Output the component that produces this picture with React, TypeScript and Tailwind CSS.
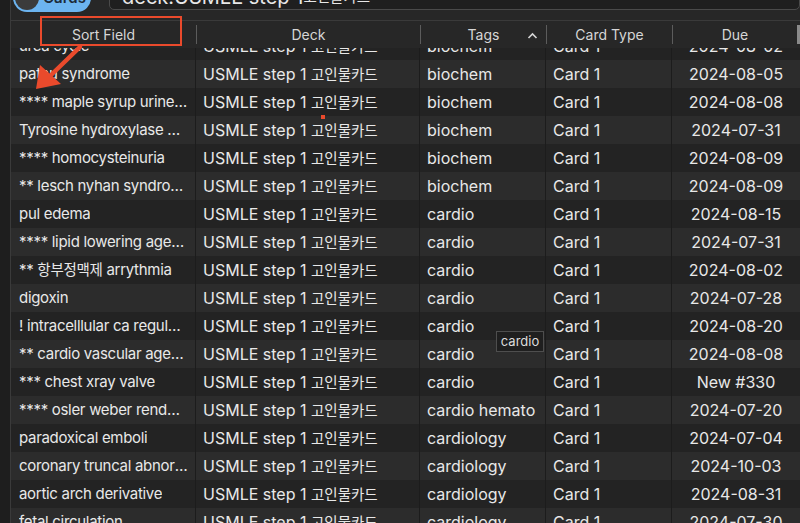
import React from "react";

const rows = [
  { sort: "urea cycle", tags: "biochem", due: "2024-08-02" },
  { sort: "patau syndrome", tags: "biochem", due: "2024-08-05" },
  { sort: "**** maple syrup urine disease", tags: "biochem", due: "2024-08-08" },
  { sort: "Tyrosine hydroxylase deficiency", tags: "biochem", due: "2024-07-31" },
  { sort: "**** homocysteinuria", tags: "biochem", due: "2024-08-09" },
  { sort: "** lesch nyhan syndrome", tags: "biochem", due: "2024-08-09" },
  { sort: "pul edema", tags: "cardio", due: "2024-08-15" },
  { sort: "**** lipid lowering agents", tags: "cardio", due: "2024-07-31" },
  { sort: "** 항부정맥제 arrythmia", tags: "cardio", due: "2024-08-02" },
  { sort: "digoxin", tags: "cardio", due: "2024-07-28" },
  { sort: "! intracelllular ca regulation", tags: "cardio", due: "2024-08-20" },
  { sort: "** cardio vascular agents", tags: "cardio", due: "2024-08-08" },
  { sort: "*** chest xray valve", tags: "cardio", due: "New #330" },
  { sort: "**** osler weber rendu syndrome", tags: "cardio hemato", due: "2024-07-20" },
  { sort: "paradoxical emboli", tags: "cardiology", due: "2024-07-04" },
  { sort: "coronary truncal abnormalities", tags: "cardiology", due: "2024-10-03" },
  { sort: "aortic arch derivative", tags: "cardiology", due: "2024-08-31" },
  { sort: "fetal circulation", tags: "cardiology", due: "2024-07-30" },
];

const font = { fontFamily: "Inter, 'Noto Sans CJK KR', sans-serif" };

// hangul runs render a bit smaller so they sit like the mac font
function Mixed({ text }: { text: string }) {
  return (
    <>
      {text.split(/([\uAC00-\uD7A3]+)/).map((part, i) =>
        /[\uAC00-\uD7A3]/.test(part) ? (
          <span key={i} className="text-[14.5px]">{part}</span>
        ) : (
          <React.Fragment key={i}>{part}</React.Fragment>
        )
      )}
    </>
  );
}

export default function App() {
  return (
    <div
      className="relative flex h-[523px] w-[800px] overflow-hidden bg-[#262626] text-[#e8e8e8]"
      style={font}
    >
      {/* left sidebar edge */}
      <div className="w-[11px] shrink-0 border-r border-[#3a3a3a] bg-[#1e1e1e]" />

      <div className="flex min-w-0 flex-1 flex-col">
        {/* toolbar, scrolled mostly out of view */}
        <div className="h-[20px] shrink-0 bg-[#272727]">
          <div className="flex h-[12px] items-end gap-[18px] overflow-hidden pl-[2px]">
            <div className="flex h-[28px] w-[78px] shrink-0 items-center gap-[4px] rounded-full bg-[#6cb4f0] pl-[2px]">
              <div className="h-[24px] w-[24px] rounded-full bg-[#3b3b3b]" />
              <span className="text-[15px] font-semibold text-[#1c2a38]">Cards</span>
            </div>
            <div className="mb-[2px] flex h-[28px] flex-1 items-center rounded-[5px] border border-[#4a4a4a] bg-[#1f1f1f] pl-[12px] pt-[2px] text-[20px] text-[#e8e8e8]">
              <Mixed text="deck:USMLE step 1 고인물카드" />
            </div>
          </div>
        </div>

        {/* header */}
        <div className="flex h-[28px] shrink-0 border-t border-[#3a3a3a] bg-[#272727] text-[14px] text-[#d6d6d6]">
          <div className="flex w-[185px] items-center justify-center">Sort Field</div>
          <div className="my-[4px] flex w-[224px] items-center justify-center border-l border-[#5c5c5c]">Deck</div>
          <div className="relative my-[4px] flex w-[126px] items-center justify-center border-l border-[#5c5c5c]">
            Tags
            <svg className="absolute right-[8px] top-[7px]" width="11" height="8" viewBox="0 0 11 8">
              <path d="M1.5 6 L5.5 2 L9.5 6" fill="none" stroke="#d6d6d6" strokeWidth="1.6" />
            </svg>
          </div>
          <div className="my-[4px] flex w-[126px] items-center justify-center border-l border-[#5c5c5c]">Card Type</div>
          <div className="my-[4px] flex flex-1 items-center justify-center border-l border-r-[3px] border-[#5c5c5c] border-r-[#8a8a8a]">Due</div>
        </div>

        {/* rows, scrolled a little */}
        <div className="min-h-0 flex-1 overflow-hidden">
          <div className="-mt-[16px]">
            {rows.map((r, i) => (
              <div
                key={i}
                className={`flex h-[28px] text-[16px] ${i % 2 === 0 ? "bg-[#232323]" : "bg-[#2c2c2c]"}`}
              >
                <div className="flex w-[185px] items-center overflow-hidden border-r border-[#1c1c1c] pl-[8px] pr-[7px] text-[15px] tracking-[-0.3px]">
                  <span className="truncate">
                    <Mixed text={r.sort} />
                  </span>
                </div>
                <div className="flex w-[224px] items-center border-r border-[#1c1c1c] pl-[7px]">
                  <span>
                    <Mixed text="USMLE step 1 고인물카드" />
                  </span>
                </div>
                <div className="flex w-[126px] items-center border-r border-[#1c1c1c] pl-[7px]">{r.tags}</div>
                <div className="flex w-[126px] items-center border-r border-[#1c1c1c] pl-[7px]">Card 1</div>
                <div className="flex flex-1 items-center justify-center">{r.due}</div>
              </div>
            ))}
          </div>
        </div>
      </div>

      {/* annotation: red box */}
      <div className="absolute left-[40px] top-[16px] h-[30px] w-[142px] border-[2.5px] border-[#ea4a2c]" />

      {/* annotation: arrow */}
      <svg className="absolute left-0 top-0" width="100" height="100" viewBox="0 0 100 100">
        <line x1="80" y1="47" x2="50" y2="76" stroke="#ea4a2c" strokeWidth="4.5" strokeLinecap="round" />
        <polygon points="36,89 40,65 61,84" fill="#ea4a2c" />
      </svg>

      {/* stray red dot */}
      <div className="absolute left-[321px] top-[115px] h-[4px] w-[4px] bg-[#ea4a2c]" />

      {/* tooltip */}
      <div className="absolute left-[496px] top-[331px] flex h-[21px] w-[48px] items-center justify-center border border-[#4e4e4e] bg-[#1f1f1f] text-[13px] text-[#dcdcdc]">
        cardio
      </div>
    </div>
  );
}
